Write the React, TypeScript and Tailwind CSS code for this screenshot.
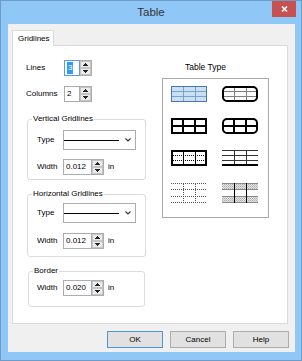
import React from "react";

const Tri = ({ up }: { up?: boolean }) => (
  <svg width="5" height="3" viewBox="0 0 5 3" shapeRendering="crispEdges">
    <polygon points={up ? "2.5,0 5,3 0,3" : "0,0 5,0 2.5,3"} fill="#222" />
  </svg>
);

interface SpinProps {
  value: string;
  boxClass: string;
  focused?: boolean;
}

const Spin = ({ value, boxClass, focused }: SpinProps) => (
  <div className="flex h-[16px]">
    <div
      className={`flex items-center bg-white pl-[2px] border ${boxClass} ${
        focused ? "border-[#569de5]" : "border-[#abadb3]"
      }`}
    >
      {focused ? (
        <span className="bg-[#3399ff] text-white leading-[12px] px-[1px]">{value}</span>
      ) : (
        <span className="leading-none">{value}</span>
      )}
    </div>
    <div className="flex w-[12px] flex-col border-y border-r border-[#abadb3] bg-white">
      <div className="flex flex-1 items-center justify-center border border-[#c4c4c4] bg-[#ececec]">
        <Tri up />
      </div>
      <div className="flex flex-1 items-center justify-center border border-[#c4c4c4] bg-[#ececec]">
        <Tri />
      </div>
    </div>
  </div>
);

const LineCombo = () => (
  <div className="flex h-[20px] w-[73px] items-center border border-[#abadb3] bg-white">
    <div className="h-px w-[55px] bg-black" />
    <svg className="ml-[6px]" width="6" height="4" viewBox="0 0 6 4">
      <polyline points="0.5,0.5 3,3 5.5,0.5" fill="none" stroke="#333" strokeWidth="1.1" />
    </svg>
  </div>
);

const Group = ({
  title,
  className,
  children,
}: {
  title: string;
  className: string;
  children: React.ReactNode;
}) => (
  <div className={`relative rounded-[3px] border border-[#dcdcdc] ${className}`}>
    <span className="absolute -top-[6px] left-[4px] bg-white px-[1px] leading-[10px]">{title}</span>
    {children}
  </div>
);

const WidthRow = ({ value, className }: { value: string; className: string }) => (
  <div className={`flex items-center ${className}`}>
    <span className="w-[26px]">Width</span>
    <Spin value={value} boxClass="w-[29px]" />
    <span className="ml-[4px]">in</span>
  </div>
);

const TypeRow = () => (
  <div className="flex items-center">
    <span className="w-[26px]">Type</span>
    <LineCombo />
  </div>
);

// table type thumbnails
const Sel = () => (
  <svg width="36" height="16" shapeRendering="crispEdges">
    <rect x="0.5" y="0.5" width="35" height="15" fill="#c8e0f6" stroke="#4a77a6" />
    <line x1="12.5" y1="1" x2="12.5" y2="15" stroke="#7f9fc4" />
    <line x1="24.5" y1="1" x2="24.5" y2="15" stroke="#7f9fc4" />
    <line x1="1" y1="5.5" x2="35" y2="5.5" stroke="#7f9fc4" />
    <line x1="1" y1="10.5" x2="35" y2="10.5" stroke="#7f9fc4" />
  </svg>
);

const RoundGray = () => (
  <svg width="36" height="16">
    <g shapeRendering="crispEdges" stroke="#808080">
      <line x1="12.5" y1="1" x2="12.5" y2="15" />
      <line x1="24.5" y1="1" x2="24.5" y2="15" />
      <line x1="1" y1="5.5" x2="35" y2="5.5" />
      <line x1="1" y1="10.5" x2="35" y2="10.5" />
    </g>
    <rect x="1" y="1" width="34" height="14" rx="4" fill="none" stroke="#000" strokeWidth="2" />
  </svg>
);

const SquareBold = () => (
  <svg width="36" height="16" shapeRendering="crispEdges">
    <g stroke="#000" strokeWidth="2">
      <line x1="12" y1="1" x2="12" y2="15" />
      <line x1="24" y1="1" x2="24" y2="15" />
      <line x1="1" y1="8" x2="35" y2="8" />
    </g>
    <rect x="1" y="1" width="34" height="14" fill="none" stroke="#000" strokeWidth="2" />
  </svg>
);

const RoundBold = () => (
  <svg width="36" height="16">
    <g stroke="#000" strokeWidth="2" shapeRendering="crispEdges">
      <line x1="12" y1="1" x2="12" y2="15" />
      <line x1="24" y1="1" x2="24" y2="15" />
      <line x1="1" y1="8" x2="35" y2="8" />
    </g>
    <rect x="1" y="1" width="34" height="14" rx="4" fill="none" stroke="#000" strokeWidth="2" />
  </svg>
);

const SquareDotted = () => (
  <svg width="36" height="16" shapeRendering="crispEdges">
    <g stroke="#000" strokeDasharray="1 1">
      <line x1="2" y1="5.5" x2="34" y2="5.5" />
      <line x1="2" y1="10.5" x2="34" y2="10.5" />
    </g>
    <line x1="12.5" y1="1" x2="12.5" y2="15" stroke="#000" />
    <line x1="24.5" y1="1" x2="24.5" y2="15" stroke="#000" />
    <rect x="1" y="1" width="34" height="14" fill="none" stroke="#000" strokeWidth="2" />
  </svg>
);

const OpenRows = () => (
  <svg width="36" height="16" shapeRendering="crispEdges">
    <g stroke="#333">
      <line x1="0" y1="0.5" x2="36" y2="0.5" />
      <line x1="0" y1="5.5" x2="36" y2="5.5" />
      <line x1="0" y1="10.5" x2="36" y2="10.5" />
      <line x1="12.5" y1="0" x2="12.5" y2="15" />
      <line x1="24.5" y1="0" x2="24.5" y2="15" />
    </g>
    <line x1="0" y1="15" x2="36" y2="15" stroke="#000" strokeWidth="2" />
  </svg>
);

const AllDotted = () => (
  <svg width="36" height="22" shapeRendering="crispEdges">
    <g stroke="#555" strokeDasharray="1 1">
      <line x1="0" y1="1.5" x2="36" y2="1.5" />
      <line x1="0" y1="7.5" x2="36" y2="7.5" />
      <line x1="0" y1="14.5" x2="36" y2="14.5" />
      <line x1="0" y1="20.5" x2="36" y2="20.5" />
      <line x1="12.5" y1="2" x2="12.5" y2="20" />
      <line x1="24.5" y1="2" x2="24.5" y2="20" />
    </g>
  </svg>
);

const Shaded = () => (
  <svg width="36" height="22" shapeRendering="crispEdges">
    <defs>
      <pattern id="chk" width="2" height="2" patternUnits="userSpaceOnUse">
        <rect width="2" height="2" fill="#e4e4e4" />
        <rect width="1" height="1" fill="#ababab" />
        <rect x="1" y="1" width="1" height="1" fill="#c4c4c4" />
      </pattern>
    </defs>
    <rect x="0" y="1" width="36" height="7" fill="url(#chk)" />
    <rect x="0" y="14" width="36" height="7" fill="url(#chk)" />
    <g stroke="#8a8a8a">
      <line x1="0" y1="1.5" x2="36" y2="1.5" />
      <line x1="0" y1="7.5" x2="36" y2="7.5" />
      <line x1="0" y1="14.5" x2="36" y2="14.5" />
      <line x1="0" y1="20.5" x2="36" y2="20.5" />
    </g>
    <line x1="12.5" y1="1" x2="12.5" y2="21" stroke="#000" />
    <line x1="24.5" y1="1" x2="24.5" y2="21" stroke="#000" />
  </svg>
);

const Button = ({ label, primary }: { label: string; primary?: boolean }) => (
  <div
    className={`flex h-[17px] w-[56px] items-center justify-center border bg-[#e1e1e1] ${
      primary ? "border-[#4f94d4]" : "border-[#adadad]"
    }`}
  >
    {label}
  </div>
);

export default function App() {
  return (
    <div className="flex h-[361px] w-[302px] flex-col border border-[#6f9bc8] bg-[#8fc7f6] font-['Liberation_Sans',Arial,sans-serif] text-[8px] leading-none text-black">
      {/* title bar */}
      <div className="relative flex h-[23px] shrink-0 justify-end pr-[5px]">
        <span className="absolute inset-0 flex items-center justify-center text-[11.5px] text-[#333]">
          Table
        </span>
        <div className="relative flex h-[16px] w-[24px] items-center justify-center bg-[#c75050]">
          <svg width="7" height="6" viewBox="0 0 7 6">
            <path d="M1 0.5 L6 5.5 M6 0.5 L1 5.5" stroke="#fff" strokeWidth="1.6" />
          </svg>
        </div>
      </div>

      {/* client */}
      <div className="ml-[7px] flex h-[328px] w-[287px] flex-col bg-[#f0f0f0] pl-[4px] pr-[7px] pt-[6px]">
        <div className="flex h-[15px]">
          <div className="relative z-10 -mb-px flex h-[16px] w-[42px] items-center border-x border-t border-[#d9d9d9] bg-white pl-[5px]">
            Gridlines
          </div>
        </div>

        <div className="flex h-[279px] border border-[#d9d9d9] bg-white pl-[13px]">
          {/* left column */}
          <div className="flex w-[120px] flex-col pt-[14px]">
            <div className="flex items-center">
              <span className="w-[38px]">Lines</span>
              <Spin value="3" boxClass="w-[16px]" focused />
            </div>
            <div className="mt-[10px] flex items-center">
              <span className="w-[38px]">Columns</span>
              <Spin value="2" boxClass="w-[16px]" />
            </div>

            <Group title="Vertical Gridlines" className="ml-[1px] mt-[17px] w-[119px] pb-[4px] pl-[9px] pt-[10px]">
              <TypeRow />
              <WidthRow value="0.012" className="mt-[9px]" />
            </Group>

            <Group title="Horizontal Gridlines" className="ml-[1px] mt-[14px] w-[119px] pb-[7px] pl-[9px] pt-[8px]">
              <TypeRow />
              <WidthRow value="0.012" className="mt-[10px]" />
            </Group>

            <Group title="Border" className="ml-[2px] mt-[14px] w-[117px] pb-[10px] pl-[8px] pt-[8px]">
              <WidthRow value="0.020" className="" />
            </Group>
          </div>

          {/* right column */}
          <div className="ml-[16px] flex flex-col pt-[16px]">
            <span className="pl-[23px] text-[8.5px] leading-[10px]">Table Type</span>
            <div className="mt-[6px] h-[140px] w-[107px] border border-[#a9a9a9] bg-white pl-[8px] pt-[7px]">
              <div className="grid grid-cols-[36px_36px] gap-x-[15px] gap-y-[16px]">
                <Sel />
                <RoundGray />
                <SquareBold />
                <RoundBold />
                <SquareDotted />
                <OpenRows />
                <AllDotted />
                <Shaded />
              </div>
            </div>
          </div>
        </div>

        <div className="-mr-[1px] mt-[7px] flex justify-end gap-[7px]">
          <Button label="OK" primary />
          <Button label="Cancel" />
          <Button label="Help" />
        </div>
      </div>
    </div>
  );
}
